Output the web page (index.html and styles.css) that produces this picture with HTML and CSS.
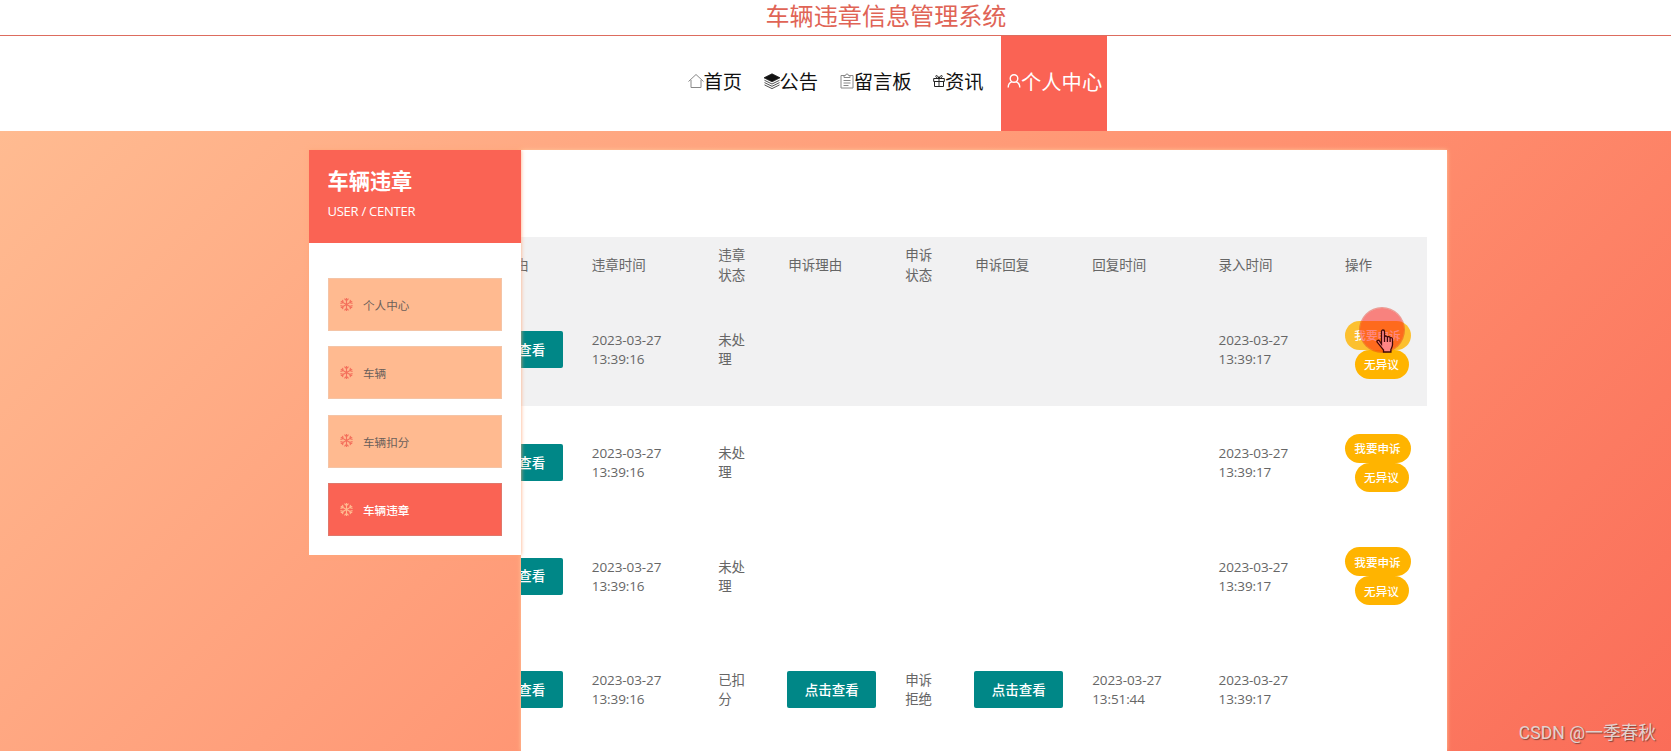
FILE: index.html
```
<!DOCTYPE html>
<html lang="zh">
<head>
    <meta charset="UTF-8">
    <title>车辆违章信息管理系统</title>
    <link rel="stylesheet" href="styles.css">
</head>
<body>
    <svg class="sprite" width="0" height="0">
        <path id="arm" d="M8 8V1M5.800 1.800L8 4l2.200-2.200"/>
        <symbol id="snow" viewBox="0 0 16 16">
            <g fill="none" stroke="currentColor" stroke-width="1.2">
                <use href="#arm"/>
                <use href="#arm" transform="rotate(60 8 8)"/>
                <use href="#arm" transform="rotate(120 8 8)"/>
                <use href="#arm" transform="rotate(180 8 8)"/>
                <use href="#arm" transform="rotate(240 8 8)"/>
                <use href="#arm" transform="rotate(300 8 8)"/>
            </g>
        </symbol>
    </svg>

    <h1 class="title">车辆违章信息管理系统</h1>

    <ul class="nav">
        <li>
            <svg class="icon home" viewBox="0 0 16 16"><path d="M.5 8.500L8 1.500l7.500 7M3 7v7.500h10V7"/></svg>首页
        </li>
        <li>
            <svg class="icon layers" viewBox="0 0 16 16"><path class="fill" d="M0 4.800l8-4 8 4-8 4z"/><path d="M.5 7.300L8 11l7.500-3.700M.5 9.600L8 13.300l7.500-3.700M.5 11.900L8 15.600l7.500-3.700"/></svg>公告
        </li>
        <li>
            <svg class="icon board" viewBox="0 0 14 16"><path d="M4 2.500H1v12.500h12V2.500h-3M4 4.500V2.500h1.500a1.500 1.500 0 013 0H10v2zM3.500 7.500h7M3.500 10h7M3.500 12.500h5"/></svg>留言板
        </li>
        <li>
            <svg class="icon gift" viewBox="0 0 12 14"><path d="M.7 4.500h10.600v3H.7zM1.500 7.500v5h9v-5M6 4.500v8M6 4.500C3 4.500 2 1.500 3.500 1.500S6 4.500 6 4.500s1-3 2.500-3S9 4.500 6 4.500"/></svg>资讯
        </li>
        <li class="active">
            <svg class="icon user" viewBox="0 0 14 16"><circle cx="7" cy="5.500" r="3.800"/><path d="M1.200 14.500c0-2.800 1.600-5 4-5.800M8.800 8.700c2.400.8 4 3 4 5.800"/></svg>个人中心
        </li>
    </ul>

    <div class="main">
        <div class="sidebar">
            <div class="sidebar-head">
                <h2>车辆违章</h2>
                <p>USER / CENTER</p>
            </div>
            <ul class="menu">
                <li><svg><use href="#snow"/></svg>个人中心</li>
                <li><svg><use href="#snow"/></svg>车辆</li>
                <li><svg><use href="#snow"/></svg>车辆扣分</li>
                <li class="active"><svg><use href="#snow"/></svg>车辆违章</li>
            </ul>
        </div>

        <div class="content">
            <div class="scroll">
                <table>
                    <colgroup>
                        <col class="c-btn"><col class="c-time"><col class="c-state"><col class="c-btn">
                        <col class="c-state"><col class="c-btn"><col class="c-time"><col class="c-time"><col class="c-op">
                    </colgroup>
                    <thead>
                        <tr>
                            <th>违章理由</th>
                            <th>违章时间</th>
                            <th>违章状态</th>
                            <th>申诉理由</th>
                            <th>申诉状态</th>
                            <th>申诉回复</th>
                            <th>回复时间</th>
                            <th>录入时间</th>
                            <th>操作</th>
                        </tr>
                    </thead>
                    <tbody>
                        <tr class="hover">
                            <td><button class="view">点击查看</button></td>
                            <td>2023-03-27 13:39:16</td>
                            <td>未处理</td>
                            <td></td>
                            <td></td>
                            <td></td>
                            <td></td>
                            <td>2023-03-27 13:39:17</td>
                            <td>
                                <div class="ops">
                                    <button class="pill hover">我要申诉</button>
                                    <button class="pill second">无异议</button>
                                    <span class="click"></span>
                                    <svg class="pointer" viewBox="0 0 18 24"><path d="M5.500 15V2.500c0-2 3-2 3 0V8c.5-1.500 2.800-1.200 2.900.4.600-1.200 2.600-.8 2.700.6.900-.9 2.400-.2 2.400 1.200v5.600c0 2-1 3-1.600 4.700V23H7.500v-2C5.500 18.500 3 15.500 1.200 13.200c-.9-1.700 1-2.500 2.200-1.400zM8.500 8v5M11.400 8.500v4.500M14.100 9.500v3.500"/></svg>
                                </div>
                            </td>
                        </tr>
                        <tr>
                            <td><button class="view">点击查看</button></td>
                            <td>2023-03-27 13:39:16</td>
                            <td>未处理</td>
                            <td></td>
                            <td></td>
                            <td></td>
                            <td></td>
                            <td>2023-03-27 13:39:17</td>
                            <td>
                                <div class="ops">
                                    <button class="pill">我要申诉</button>
                                    <button class="pill second">无异议</button>
                                </div>
                            </td>
                        </tr>
                        <tr>
                            <td><button class="view">点击查看</button></td>
                            <td>2023-03-27 13:39:16</td>
                            <td>未处理</td>
                            <td></td>
                            <td></td>
                            <td></td>
                            <td></td>
                            <td>2023-03-27 13:39:17</td>
                            <td>
                                <div class="ops">
                                    <button class="pill">我要申诉</button>
                                    <button class="pill second">无异议</button>
                                </div>
                            </td>
                        </tr>
                        <tr>
                            <td><button class="view">点击查看</button></td>
                            <td>2023-03-27 13:39:16</td>
                            <td>已扣分</td>
                            <td><button class="view">点击查看</button></td>
                            <td>申诉拒绝</td>
                            <td><button class="view">点击查看</button></td>
                            <td>2023-03-27 13:51:44</td>
                            <td>2023-03-27 13:39:17</td>
                            <td></td>
                        </tr>
                    </tbody>
                </table>
            </div>
        </div>
    </div>

    <div class="watermark">CSDN @一季春秋</div>
</body>
</html>
```

FILE: styles.css
```
* {
    box-sizing: border-box;
}

body {
    margin: 0;
    height: 751px;
    display: flex;
    flex-direction: column;
    overflow: hidden;
    background: #fff;
    font-family: "Open Sans", "Noto Sans CJK SC", sans-serif;
    color: #666;
}

h1, h2, p, ul {
    margin: 0;
    padding: 0;
    font-weight: normal;
    list-style: none;
}

.sprite {
    position: absolute;
}

/* 顶部标题 */
.title {
    height: 35.5px;
    padding-left: 101px;
    border-bottom: 1px solid #dd6c5e;
    text-align: center;
    font-size: 24.1px;
    line-height: 31px;
    color: #e06456;
    flex: none;
}

/* 导航 */
.nav {
    height: 95.5px;
    padding-left: 681.5px;
    display: flex;
    gap: 9.5px;
    flex: none;
}

.nav li {
    display: flex;
    align-items: center;
    padding: 0 6px 4px;
    font-size: 19.3px;
    color: #111;
    white-space: nowrap;
}

.nav li.active {
    width: 106px;
    margin-left: 2px;
    padding-right: 0;
    background: #fa6354;
    color: #fff;
    font-size: 20.3px;
}

.icon {
    width: 16px;
    height: 16px;
    fill: none;
    stroke: #222;
    stroke-width: 1;
    flex: none;
}

.icon .fill {
    fill: #111;
}

.icon.home,
.icon.board {
    stroke: #888;
}

.icon.board,
.icon.user {
    width: 14px;
}

.icon.layers {
    stroke-width: .8;
}

.icon.gift {
    width: 12px;
    height: 14px;
    stroke-width: 1;
}

.icon.user {
    stroke: #fff;
    stroke-width: 1.4;
}

/* 主体 */
.main {
    flex: 1;
    min-height: 0;
    display: flex;
    align-items: flex-start;
    padding: 19px 0 0 309px;
    background: linear-gradient(135deg, #ffbb91 0, #ff9170 57%, #fa6b57 102%);
}

.sidebar {
    width: 212px;
    height: 405px;
    background: #fff;
    box-shadow: 0 0 4px #ffa878;
    flex: none;
    position: relative;
}

.sidebar-head {
    height: 93px;
    padding: 15px 18.5px 0;
    background: #fa6354;
    color: #fff;
}

.sidebar-head h2 {
    font-size: 21.2px;
    font-weight: bold;
    line-height: 32px;
}

.sidebar-head p {
    margin-top: 4px;
    font-size: 13px;
    letter-spacing: -.25px;
    line-height: 20px;
}

.menu {
    padding: 35px 19px 0;
    display: flex;
    flex-direction: column;
    gap: 15.4px;
}

.menu li {
    height: 53px;
    display: flex;
    align-items: center;
    padding: 1px 0 0 10px;
    background: #ffba90;
    border: 1px solid #f4c4a6;
    font-size: 11.6px;
    color: #6b5f5a;
}

.menu svg {
    width: 15px;
    height: 15px;
    margin: 0 9px 2px 0;
    color: #f4705c;
}

.menu .active {
    background: #fa6354;
    border-color: #e0776b;
    color: #fff;
    font-weight: 500;
}

.menu .active svg {
    color: #ffba90;
}

.content {
    width: 926px;
    align-self: stretch;
    overflow: hidden;
    padding: 87px 20px 0 0;
    background: #fff;
    box-shadow: 0 0 4px #ffc89a;
}

.scroll {
    overflow: hidden;
    display: flex;
    justify-content: flex-end;
}

/* 违章表格 */
table {
    width: 967px;
    table-layout: fixed;
    border-collapse: collapse;
    font-size: 13.5px;
    line-height: 19.2px;
    flex: none;
}

.c-btn { width: 117px; }
.c-time { width: 126.4px; }
.c-state { width: 70px; }
.c-op { width: 97px; }

th, td {
    padding: 1px 14px 0 15px;
    text-align: left;
    font-weight: normal;
}

th {
    height: 56px;
}

td {
    height: 113.3px;
    letter-spacing: -.1px;
}

thead tr,
tr.hover {
    background: #f1f1f2;
}

th:nth-child(2), th:nth-child(7), th:nth-child(8),
td:nth-child(2), td:nth-child(7), td:nth-child(8) {
    padding-right: 35px;
}

th:nth-child(3), th:nth-child(5),
td:nth-child(3), td:nth-child(5) {
    padding-right: 25px;
}

button {
    display: block;
    border: 0;
    padding: 0;
    font-family: inherit;
    font-weight: 500;
    color: #fff;
}

.view {
    width: 89px;
    height: 37px;
    margin: 0 0 1px -1px;
    padding-bottom: 2px;
    border-radius: 2px;
    background: #008787;
    font-size: 13.5px;
}

.ops {
    position: relative;
    width: 68px;
    margin-bottom: 1px;
}

.pill {
    width: 66px;
    height: 29px;
    padding-right: 1px;
    border-radius: 15px;
    background: #ffb400;
    font-size: 11.6px;
}

.pill.second {
    width: 54px;
    margin-left: 10px;
}

.pill.hover {
    opacity: .8;
}

/* 点击效果 */
.click {
    position: absolute;
    left: 14px;
    top: -14px;
    width: 46px;
    height: 46px;
    border: 1px solid rgba(225, 50, 30, .45);
    border-radius: 50%;
    background: rgba(255, 20, 10, .5);
    background-clip: padding-box;
}

.pointer {
    position: absolute;
    left: 31px;
    top: 8px;
    width: 18px;
    height: 24px;
    fill: #ff8585;
    stroke: #400808;
    stroke-width: 1.3;
}

.watermark {
    position: absolute;
    right: 15px;
    bottom: 6px;
    font-family: Roboto, "Noto Sans CJK SC", sans-serif;
    font-size: 17.7px;
    line-height: 24px;
    color: #e2d2cf;
    text-shadow: 1px 1px 1px rgba(90, 50, 45, .7);
}
```
